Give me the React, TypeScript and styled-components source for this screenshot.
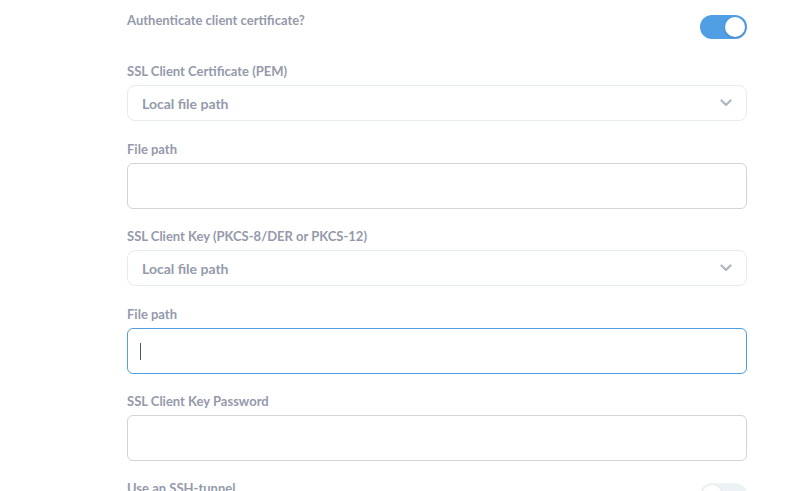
import React, { useState } from "react";
import styled, { createGlobalStyle } from "styled-components";

const GlobalStyle = createGlobalStyle`
  html, body {
    margin: 0;
    padding: 0;
    background: #ffffff;
    font-family: Lato, "Noto Sans", sans-serif;
  }
  * { box-sizing: border-box; }
`;

const Page = styled.div`
  width: 805px;
  height: 491px;
  overflow: hidden;
  padding: 11px 0 0 127px;
`;

const Form = styled.div`
  width: 620px;
  display: flex;
  flex-direction: column;
`;

const Field = styled.div`
  display: flex;
  flex-direction: column;
  margin-bottom: 18px;
`;

const ToggleRow = styled.div`
  display: flex;
  justify-content: space-between;
  align-items: flex-start;
  margin-bottom: 23px;
`;

const Label = styled.label`
  display: block;
  font-size: 13px;
  font-weight: 700;
  line-height: 18px;
  color: #949aab;
  margin-bottom: 5px;
`;

const Toggle = styled.button<{ $on: boolean }>`
  position: relative;
  width: 47px;
  height: 24px;
  margin-top: 4px;
  border: none;
  padding: 0;
  border-radius: 12px;
  background: ${(p) => (p.$on ? "#509ee3" : "#edf2f5")};
  cursor: pointer;
  &::after {
    content: "";
    position: absolute;
    top: 2px;
    left: ${(p) => (p.$on ? "25px" : "2px")};
    width: 20px;
    height: 20px;
    border-radius: 50%;
    background: #ffffff;
    box-shadow: 0 1px 3px rgba(0, 0, 0, 0.15);
  }
`;

const Select = styled.div`
  height: 36px;
  margin-bottom: 1px;
  display: flex;
  align-items: center;
  justify-content: space-between;
  padding: 0 14px 0 14px;
  border: 1px solid #e6ecee;
  border-radius: 8px;
  font-size: 14px;
  font-weight: 700;
  color: #949aab;
  cursor: pointer;
`;

const Input = styled.div<{ $focused?: boolean }>`
  height: 46px;
  display: flex;
  align-items: center;
  padding: 0 12px;
  border: 1px solid ${(p) => (p.$focused ? "#509ee3" : "#d4d4d4")};
  border-radius: 6px;
  background: #fff;
`;

const Caret = styled.span`
  width: 1px;
  height: 17px;
  background: #4c5773;
`;

const Chevron = () => (
  <svg width="12" height="8" viewBox="0 0 12 8" fill="none">
    <path d="M1.5 1.5 L6 6 L10.5 1.5" stroke="#b0b5c2" strokeWidth="2.2" strokeLinecap="round" strokeLinejoin="round" />
  </svg>
);

export default function App() {
  const [authCert, setAuthCert] = useState(true);
  const [tunnel, setTunnel] = useState(false);

  return (
    <>
      <GlobalStyle />
      <Page>
        <Form>
          <ToggleRow>
            <Label>Authenticate client certificate?</Label>
            <Toggle $on={authCert} onClick={() => setAuthCert(!authCert)} />
          </ToggleRow>

          <Field>
            <Label>SSL Client Certificate (PEM)</Label>
            <Select>
              Local file path
              <Chevron />
            </Select>
          </Field>

          <Field>
            <Label>File path</Label>
            <Input />
          </Field>

          <Field>
            <Label>SSL Client Key (PKCS-8/DER or PKCS-12)</Label>
            <Select>
              Local file path
              <Chevron />
            </Select>
          </Field>

          <Field>
            <Label>File path</Label>
            <Input $focused>
              <Caret />
            </Input>
          </Field>

          <Field>
            <Label>SSL Client Key Password</Label>
            <Input />
          </Field>

          <ToggleRow>
            <Label>Use an SSH-tunnel</Label>
            <Toggle $on={tunnel} onClick={() => setTunnel(!tunnel)} />
          </ToggleRow>
        </Form>
      </Page>
    </>
  );
}
